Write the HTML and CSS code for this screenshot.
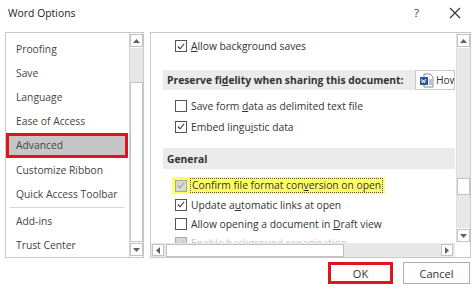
FILE: index.html
```html
<!DOCTYPE html>
<html>
<head>
<meta charset="utf-8">
<link rel="stylesheet" href="styles.css">
</head>
<body>
<div class="dialog">
  <div class="titlebar">
    <span class="title">Word Options</span>
    <span class="help">?</span>
    <svg class="close" width="12" height="12" viewBox="0 0 12 12"><path d="M1 1L11 11M11 1L1 11" stroke="#333" stroke-width="1.1" fill="none"/></svg>
  </div>
  <div class="main">
    <div class="nav">
      <div class="nav-list">
        <div class="item">Proofing</div>
        <div class="item">Save</div>
        <div class="item">Language</div>
        <div class="item">Ease of Access</div>
        <div class="item active">Advanced</div>
        <div class="item">Customize Ribbon</div>
        <div class="item">Quick Access Toolbar</div>
        <div class="sep"></div>
        <div class="item">Add-ins</div>
        <div class="item">Trust Center</div>
      </div>
      <div class="vscroll nav-scroll">
        <div class="sbtn"><svg width="7" height="4" viewBox="0 0 7 4"><path d="M0 4L3.5 0L7 4Z" fill="#606060"/></svg></div>
        <div class="track track-top"></div>
        <div class="thumb nav-thumb"></div>
        <div class="sbtn"><svg width="7" height="4" viewBox="0 0 7 4"><path d="M0 0L3.5 4L7 0Z" fill="#606060"/></svg></div>
      </div>
    </div>
    <div class="pane">
      <div class="pane-top">
        <div class="content">
          <div class="row clipped"><span class="cb"></span><span>Copy remotely stored files onto your computer</span></div>
          <div class="row"><span class="cb checked"><svg width="11" height="11" viewBox="0 0 11 11"><path d="M2 5.5L4.5 8L9 2.5" stroke="#333" stroke-width="1.2" fill="none"/></svg></span><span><u>A</u>llow background saves</span></div>
          <div class="band band-1"><span><b>Preserve fi<u>d</u>elity when sharing this document:</b></span>
            <div class="select"><svg class="docicon" width="15" height="15" viewBox="0 0 15 15"><path d="M5 1h6l3 3v10H5z" fill="#fff" stroke="#7a8ea8"/><rect x="1" y="4" width="8" height="8" fill="#2b5797"/><path d="M2.5 6l1 4 1-3 1 3 1-4" stroke="#fff" stroke-width="0.9" fill="none"/><path d="M10 7h3M10 9h3M10 11h3" stroke="#6a8ab8"/></svg><span>How</span></div>
          </div>
          <div class="row r21 first"><span class="cb"></span><span>Save form <u>d</u>ata as delimited text file</span></div>
          <div class="row r21"><span class="cb checked"><svg width="11" height="11" viewBox="0 0 11 11"><path d="M2 5.5L4.5 8L9 2.5" stroke="#333" stroke-width="1.2" fill="none"/></svg></span><span>Embed lingu<u>i</u>stic data</span></div>
          <div class="band band-2"><span><b>General</b></span></div>
          <div class="row r19 first2"><span class="hl"><span class="cb dis"><svg width="11" height="11" viewBox="0 0 11 11"><path d="M2 5.5L4.5 8L9 2.5" stroke="#a0a0a0" stroke-width="1.2" fill="none"/></svg></span><span class="focus">Confirm file format con<u>v</u>ersion on open</span></span></div>
          <div class="row r19"><span class="cb checked"><svg width="11" height="11" viewBox="0 0 11 11"><path d="M2 5.5L4.5 8L9 2.5" stroke="#333" stroke-width="1.2" fill="none"/></svg></span><span>Update a<u>u</u>tomatic links at open</span></div>
          <div class="row r19"><span class="cb"></span><span>Allow opening a document in <u>D</u>raft view</span></div>
          <div class="row r19 faded"><span class="cb dis"><svg width="11" height="11" viewBox="0 0 11 11"><path d="M2 5.5L4.5 8L9 2.5" stroke="#ccc" stroke-width="1.2" fill="none"/></svg></span><span>Enable background repagination</span></div>
        </div>
        <div class="vscroll pane-scroll">
          <div class="sbtn"><svg width="7" height="4" viewBox="0 0 7 4"><path d="M0 4L3.5 0L7 4Z" fill="#606060"/></svg></div>
          <div class="track pane-track-a"></div>
          <div class="thumb pane-thumb"></div>
          <div class="track pane-track-b"></div>
          <div class="sbtn"><svg width="7" height="4" viewBox="0 0 7 4"><path d="M0 0L3.5 4L7 0Z" fill="#606060"/></svg></div>
        </div>
      </div>
      <div class="pane-bottom">
        <div class="hscroll">
          <div class="hbtn"><svg width="4" height="7" viewBox="0 0 4 7"><path d="M4 0L0 3.5L4 7Z" fill="#606060"/></svg></div>
          <div class="hthumb"></div>
          <div class="htrack"></div>
          <div class="hbtn"><svg width="4" height="7" viewBox="0 0 4 7"><path d="M0 0L4 3.5L0 7Z" fill="#606060"/></svg></div>
        </div>
        <div class="corner"></div>
      </div>
    </div>
  </div>
  <div class="buttons">
    <div class="btn ok">OK</div>
    <div class="btn cancel">Cancel</div>
  </div>
</div>
</body>
</html>
```

FILE: styles.css
```css
* { box-sizing: border-box; }
html, body { margin: 0; padding: 0; background: #fff; }
body { font-family: "Open Sans", "Noto Sans", sans-serif; color: #333; font-size: 10.3px; }
.dialog { width: 474px; height: 290px; overflow: hidden; }
.titlebar { height: 25px; display: flex; align-items: center; padding-left: 8px; }
.title { font-size: 10.4px; color: #222; flex: 1; }
.help { font-size: 11.5px; color: #333; margin-right: 30px; }
.close { margin-right: 13px; }
.main { display: flex; margin-top: 7px; height: 226px; padding-left: 5px; gap: 6px; }
.nav { width: 139px; border: 1px solid #c8c8c8; display: flex; }
.nav-list { flex: 1; padding-top: 4px; overflow: hidden; color: #444; }
.item { height: 24px; line-height: 24px; padding-left: 10px; white-space: nowrap; }
.item.active { background: #c6c6c6; border: 3px solid #e0141e; line-height: 19px; height: 25px; padding-left: 7px; margin-right: 1px; }
.sep { height: 1px; background: #d8d8d8; margin: 1px 4px 1px 4px; }
.vscroll { width: 14px; display: flex; flex-direction: column; align-items: center; }
.nav-scroll { border-left: 1px solid #d4d4d4; }
.sbtn { width: 13px; height: 13px; border: 1px solid #c2c2c2; background: #fff; display: flex; align-items: center; justify-content: center; margin: 1px 0; }
.track { width: 100%; background: #e8e8e8; }
.track-top { height: 34px; }
.thumb { width: 13px; background: #fff; border: 1px solid #c2c2c2; }
.nav-thumb { flex: 1; }
.pane { width: 321px; border: 1px solid #c8c8c8; display: flex; flex-direction: column; }
.pane-top { flex: 1; display: flex; min-height: 0; }
.content { flex: 1; overflow: hidden; padding-left: 12px; }
.row { display: flex; align-items: center; height: 20px; padding-left: 12px; white-space: nowrap; }
.row.clipped { margin-top: -17px; }
.cb { width: 12px; height: 12px; border: 1px solid #555; background: #fff; margin-right: 4px; flex: none; display: flex; align-items: center; justify-content: center; }
.cb svg { display: block; }
.cb.dis { border-color: #a8a8a8; background: #d8d8d8; }
.band { height: 20px; background: #ebebeb; display: flex; align-items: center; padding-left: 4px; color: #333; white-space: nowrap; margin-right: 1px; }
.band b { font-weight: 700; }
.band-1 { margin-top: 14px; }
.band-2 { margin-top: 11px; height: 21px; }
.select { margin-left: auto; width: 40px; height: 20px; background: #fff; border: 1px solid #c6c6c6; display: flex; align-items: center; padding-left: 3px; overflow: hidden; }
.docicon { flex: none; margin-right: 2px; }
.r21 { height: 21px; }
.first { margin-top: 5px; }
.r19 { height: 19px; }
.first2 { margin-top: 7px; }
.hl { display: flex; align-items: center; background: #ffff66; height: 17px; padding-left: 3px; margin-left: -3px; padding-right: 2px; }
.focus { border: 1px dotted #555; line-height: 13px; padding: 0 1px; margin-left: -1px; }
.faded { color: #c8c8c8; }
.pane-scroll { border-left: 1px solid #e0e0e0; }
.pane-track-a { height: 130px; }
.pane-thumb { height: 17px; }
.pane-track-b { flex: 1; }
.pane-bottom { height: 14px; display: flex; }
.hscroll { flex: 1; display: flex; align-items: center; background: #e8e8e8; padding: 0 2px 0 1px; }
.hbtn { width: 12px; height: 12px; border: 1px solid #c2c2c2; background: #fff; display: flex; align-items: center; justify-content: center; }
.hthumb { width: 178px; height: 13px; background: #fff; border: 1px solid #c2c2c2; margin-left: 2px; }
.htrack { flex: 1; }
.corner { width: 15px; background: #fff; }
.buttons { display: flex; justify-content: flex-end; gap: 10px; margin-top: 4px; padding-right: 4px; }
.btn { height: 22px; display: flex; align-items: center; justify-content: center; font-size: 11px; color: #333; background: #fdfdfd; }
.ok { width: 65px; border: 3px solid #e0141e; }
.cancel { width: 67px; border: 1px solid #adadad; }
```
